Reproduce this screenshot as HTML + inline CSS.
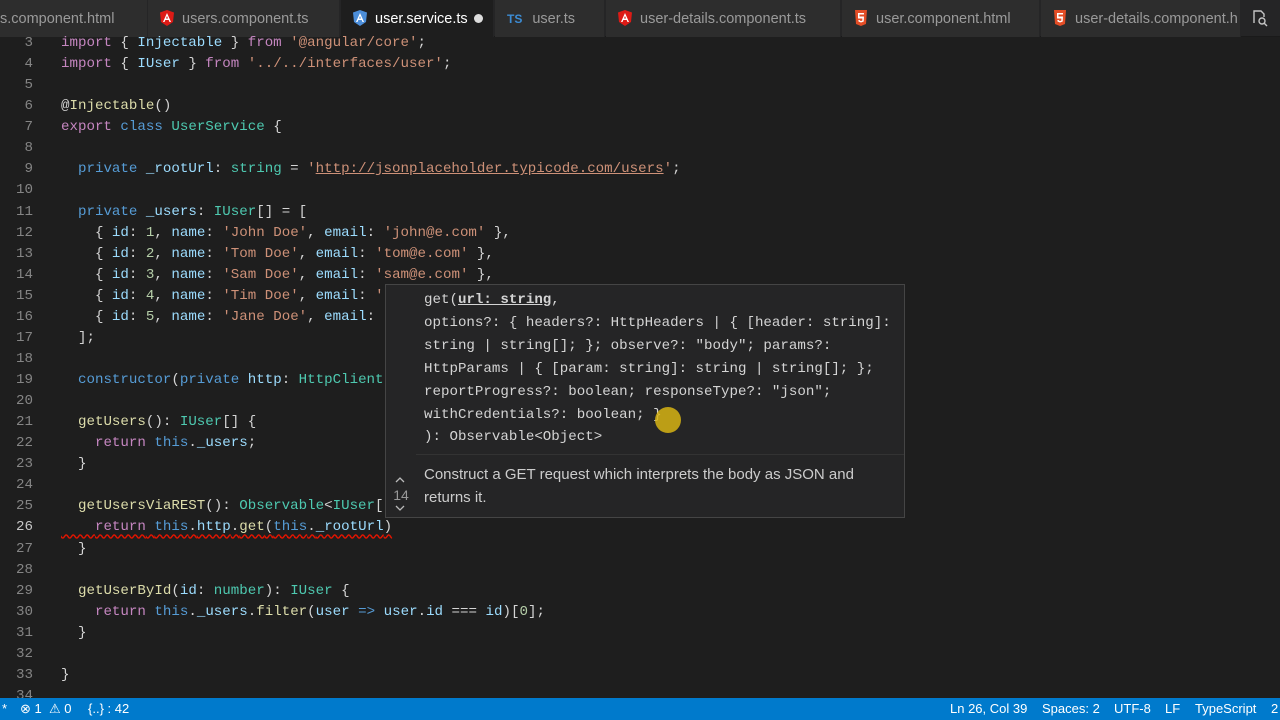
<!DOCTYPE html>
<html><head><meta charset="utf-8"><style>
*{margin:0;padding:0;box-sizing:border-box}
body{width:1280px;height:720px;overflow:hidden;background:#1e1e1e;font-family:"Liberation Sans",sans-serif;position:relative}
.tabs{position:absolute;left:0;top:0;width:1280px;height:37px;background:#252526;border-bottom:1px solid #1a1a1a}
.tab{position:absolute;top:0;height:37px;background:#2d2d2d;color:#9a9a9a;font-size:14.5px;line-height:38px;padding-left:12px;border-right:1px solid #252526;white-space:nowrap;overflow:hidden}
.tab.act{background:#1e1e1e;color:#fff}
.ic{display:inline-block;width:14px;height:16px;vertical-align:-3px;margin-right:8px}
.code{position:absolute;left:0;top:33px;width:1280px;font-family:"Liberation Mono",monospace;font-size:14.15px}
.l{height:21.07px;line-height:21.07px;white-space:pre;position:relative;color:#d4d4d4}
.n{position:absolute;left:0;width:33px;text-align:right;color:#858585}
.t{position:absolute;left:61px}
.k{color:#c586c0}.b{color:#569cd6}.ty{color:#4ec9b0}.s{color:#ce9178}.p{color:#9cdcfe}.f{color:#dcdcaa}.nu{color:#b5cea8}
.tip{position:absolute;left:385px;top:284px;width:520px;height:234px;background:#252526;border:1px solid #454545;font-family:"Liberation Mono",monospace;font-size:14.15px;color:#d4d4d4}
.tip .sig{position:absolute;left:38px;top:4px;line-height:22.9px;white-space:pre}
.tip .doc{position:absolute;left:30px;right:0;top:169px;border-top:1px solid #333;padding:8px 0 0 8px;font-family:"Liberation Sans",sans-serif;font-size:15px;line-height:23px;color:#cccccc}
.status{position:absolute;left:0;top:698px;width:1280px;height:22px;background:#007acc;color:#fff;font-size:13px;line-height:22px}
.status span{position:absolute}
</style></head><body>
<div class="tabs">
<div class="tab" style="left:-12px;width:160px">s.component.html</div>
<div class="tab" style="left:148px;width:192px"><svg class="ic" viewBox="0 0 14 16"><path d="M7 0L0 2.5l1 9.5L7 16l6-4 1-9.5z" fill="#dd1b16"/><path d="M7 3L3 12h1.5l.8-2h3.4l.8 2H11zM6 8.5l1-2.5 1 2.5z" fill="#fff"/></svg>users.component.ts</div>
<div class="tab act" style="left:341px;width:153px"><svg class="ic" viewBox="0 0 14 16"><path d="M7 0L0 2.5l1 9.5L7 16l6-4 1-9.5z" fill="#4c8ed9"/><path d="M7 3L3 12h1.5l.8-2h3.4l.8 2H11zM6 8.5l1-2.5 1 2.5z" fill="#fff"/></svg>user.service.ts<span style="position:absolute;left:133px;top:14px;width:9px;height:9px;border-radius:50%;background:#ddd"></span></div>
<div class="tab" style="left:495px;width:110px"><span style="color:#3c8cd4;font-weight:bold;font-size:12px;margin-right:10px">TS</span>user.ts</div>
<div class="tab" style="left:606px;width:235px"><svg class="ic" viewBox="0 0 14 16"><path d="M7 0L0 2.5l1 9.5L7 16l6-4 1-9.5z" fill="#dd1b16"/><path d="M7 3L3 12h1.5l.8-2h3.4l.8 2H11zM6 8.5l1-2.5 1 2.5z" fill="#fff"/></svg>user-details.component.ts</div>
<div class="tab" style="left:842px;width:198px"><svg class="ic" viewBox="0 0 14 16"><path d="M1 0h12l-1 14-5 2-5-2z" fill="#e44d26"/><path d="M4 3h6v1.5H5.5v2H10l-.3 5L7 12.5 4.5 11.5l-.1-1.5h1.4l.1.6L7 11l1.3-.4.1-2.1H4z" fill="#fff"/></svg>user.component.html</div>
<div class="tab" style="left:1041px;width:200px"><svg class="ic" viewBox="0 0 14 16"><path d="M1 0h12l-1 14-5 2-5-2z" fill="#e44d26"/><path d="M4 3h6v1.5H5.5v2H10l-.3 5L7 12.5 4.5 11.5l-.1-1.5h1.4l.1.6L7 11l1.3-.4.1-2.1H4z" fill="#fff"/></svg>user-details.component.h</div>
<svg style="position:absolute;left:1251px;top:9px" width="18" height="18" viewBox="0 0 18 18" fill="none" stroke="#c5c5c5" stroke-width="1.4"><path d="M3 14V2h7l3 3v3"/><circle cx="11" cy="12" r="3"/><path d="M13 14l3 3"/></svg>
</div>
<div class="code">
<div class="l"><span class="n">3</span><span class="t"><span class="k">import</span> { <span class="p">Injectable</span> } <span class="k">from</span> <span class="s">'@angular/core'</span>;</span></div>
<div class="l"><span class="n">4</span><span class="t"><span class="k">import</span> { <span class="p">IUser</span> } <span class="k">from</span> <span class="s">'../../interfaces/user'</span>;</span></div>
<div class="l"><span class="n">5</span></div>
<div class="l"><span class="n">6</span><span class="t">@<span class="f">Injectable</span>()</span></div>
<div class="l"><span class="n">7</span><span class="t"><span class="k">export</span> <span class="b">class</span> <span class="ty">UserService</span> {</span></div>
<div class="l"><span class="n">8</span></div>
<div class="l"><span class="n">9</span><span class="t">  <span class="b">private</span> <span class="p">_rootUrl</span>: <span class="ty">string</span> = <span class="s">'<u>http://jsonplaceholder.typicode.com/users</u>'</span>;</span></div>
<div class="l"><span class="n">10</span></div>
<div class="l"><span class="n">11</span><span class="t">  <span class="b">private</span> <span class="p">_users</span>: <span class="ty">IUser</span>[] = [</span></div>
<div class="l"><span class="n">12</span><span class="t">    { <span class="p">id</span>: <span class="nu">1</span>, <span class="p">name</span>: <span class="s">'John Doe'</span>, <span class="p">email</span>: <span class="s">'john@e.com'</span> },</span></div>
<div class="l"><span class="n">13</span><span class="t">    { <span class="p">id</span>: <span class="nu">2</span>, <span class="p">name</span>: <span class="s">'Tom Doe'</span>, <span class="p">email</span>: <span class="s">'tom@e.com'</span> },</span></div>
<div class="l"><span class="n">14</span><span class="t">    { <span class="p">id</span>: <span class="nu">3</span>, <span class="p">name</span>: <span class="s">'Sam Doe'</span>, <span class="p">email</span>: <span class="s">'sam@e.com'</span> },</span></div>
<div class="l"><span class="n">15</span><span class="t">    { <span class="p">id</span>: <span class="nu">4</span>, <span class="p">name</span>: <span class="s">'Tim Doe'</span>, <span class="p">email</span>: <span class="s">'</span></span></div>
<div class="l"><span class="n">16</span><span class="t">    { <span class="p">id</span>: <span class="nu">5</span>, <span class="p">name</span>: <span class="s">'Jane Doe'</span>, <span class="p">email</span>:</span></div>
<div class="l"><span class="n">17</span><span class="t">  ];</span></div>
<div class="l"><span class="n">18</span></div>
<div class="l"><span class="n">19</span><span class="t">  <span class="b">constructor</span>(<span class="b">private</span> <span class="p">http</span>: <span class="ty">HttpClient</span></span></div>
<div class="l"><span class="n">20</span></div>
<div class="l"><span class="n">21</span><span class="t">  <span class="f">getUsers</span>(): <span class="ty">IUser</span>[] {</span></div>
<div class="l"><span class="n">22</span><span class="t">    <span class="k">return</span> <span class="b">this</span>.<span class="p">_users</span>;</span></div>
<div class="l"><span class="n">23</span><span class="t">  }</span></div>
<div class="l"><span class="n">24</span></div>
<div class="l"><span class="n">25</span><span class="t">  <span class="f">getUsersViaREST</span>(): <span class="ty">Observable</span>&lt;<span class="ty">IUser</span>[</span></div>
<div class="l"><span class="n" style="color:#c6c6c6">26</span><span class="t" style="text-decoration:underline wavy #e51400;text-underline-offset:3px">    <span class="k">return</span> <span class="b">this</span>.<span class="p">http</span>.<span class="f">get</span>(<span class="b">this</span>.<span class="p">_rootUrl</span>)</span></div>
<div class="l"><span class="n">27</span><span class="t">  }</span></div>
<div class="l"><span class="n">28</span></div>
<div class="l"><span class="n">29</span><span class="t">  <span class="f">getUserById</span>(<span class="p">id</span>: <span class="ty">number</span>): <span class="ty">IUser</span> {</span></div>
<div class="l"><span class="n">30</span><span class="t">    <span class="k">return</span> <span class="b">this</span>.<span class="p">_users</span>.<span class="f">filter</span>(<span class="p">user</span> <span class="b">=&gt;</span> <span class="p">user</span>.<span class="p">id</span> === <span class="p">id</span>)[<span class="nu">0</span>];</span></div>
<div class="l"><span class="n">31</span><span class="t">  }</span></div>
<div class="l"><span class="n">32</span></div>
<div class="l"><span class="n">33</span><span class="t">}</span></div>
<div class="l"><span class="n">34</span></div>
</div>
<div class="tip">
<div class="sig">get(<b><u>url: string</u></b>,
options?: { headers?: HttpHeaders | { [header: string]:
string | string[]; }; observe?: "body"; params?:
HttpParams | { [param: string]: string | string[]; };
reportProgress?: boolean; responseType?: "json";
withCredentials?: boolean; }
): Observable&lt;Object&gt;</div>
<div style="position:absolute;left:269px;top:122px;width:26px;height:26px;border-radius:50%;background:rgba(215,180,20,0.85)"></div>
<svg style="position:absolute;left:8px;top:191px" width="12" height="8" viewBox="0 0 12 8" fill="none" stroke="#bbb" stroke-width="1.3"><path d="M2 6l4-4 4 4"/></svg>
<div style="position:absolute;left:4px;top:202px;color:#999;font-family:'Liberation Sans',sans-serif;font-size:14px;width:22px;text-align:center">14</div>
<svg style="position:absolute;left:8px;top:219px" width="12" height="8" viewBox="0 0 12 8" fill="none" stroke="#bbb" stroke-width="1.3"><path d="M2 2l4 4 4-4"/></svg>
<div class="doc">Construct a GET request which interprets the body as JSON and<br>returns it.</div>
</div>
<div class="status">
<span style="left:2px">*</span>
<span style="left:20px">⊗ 1 &nbsp;⚠ 0</span>
<span style="left:88px">{..} : 42</span>
<span style="left:950px">Ln 26, Col 39</span>
<span style="left:1042px">Spaces: 2</span>
<span style="left:1114px">UTF-8</span>
<span style="left:1165px">LF</span>
<span style="left:1195px">TypeScript</span>
<span style="left:1271px">2</span>
</div>
</body></html>
